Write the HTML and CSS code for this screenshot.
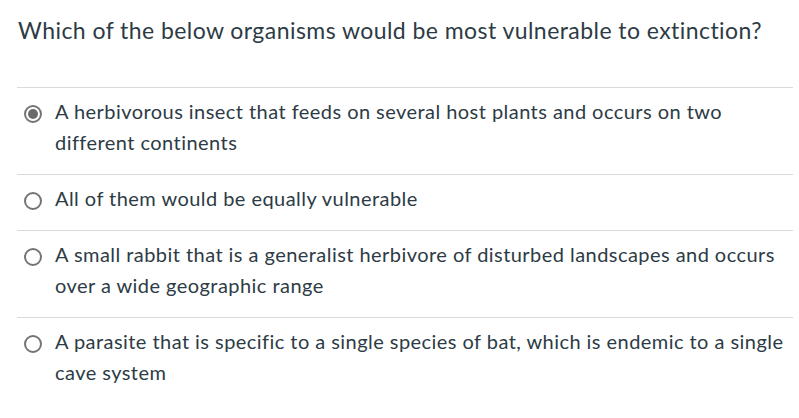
FILE: index.html
```html
<!DOCTYPE html>
<html>
<head>
<meta charset="utf-8">
<link rel="stylesheet" href="styles.css">
</head>
<body>
<div class="question">
  <div class="question-text">Which of the below organisms would be most vulnerable to extinction?</div>
  <div class="answers">
    <div class="answer">
      <span class="radio checked"></span>
      <span class="answer-text">A herbivorous insect that feeds on several host plants and occurs on two different continents</span>
    </div>
    <div class="answer">
      <span class="radio"></span>
      <span class="answer-text">All of them would be equally vulnerable</span>
    </div>
    <div class="answer">
      <span class="radio"></span>
      <span class="answer-text">A small rabbit that is a generalist herbivore of disturbed landscapes and occurs over a wide geographic range</span>
    </div>
    <div class="answer">
      <span class="radio"></span>
      <span class="answer-text">A parasite that is specific to a single species of bat, which is endemic to a single cave system</span>
    </div>
  </div>
</div>
</body>
</html>
```
FILE: styles.css
```css
html, body {
  margin: 0;
  padding: 0;
  background: #ffffff;
}
body {
  font-family: Lato, "Open Sans", sans-serif;
  color: #2d3b45;
}
.question {
  padding: 0 6px 0 17px;
}
.question-text {
  font-size: 23px;
  letter-spacing: 0.44px;
  line-height: 30px;
  padding: 15px 0 42px 1px;
}
.answer {
  display: flex;
  align-items: flex-start;
  border-top: 1px solid #dadada;
  padding: 8px 0 16px 7px;
  font-size: 20px;
  letter-spacing: 0.45px;
  line-height: 31px;
}
.radio {
  flex: none;
  width: 18px;
  height: 18px;
  box-sizing: border-box;
  border: 2px solid #757575;
  border-radius: 50%;
  margin: 9px 13px 0 0;
  position: relative;
  background: #fff;
}
.radio.checked::after {
  content: "";
  position: absolute;
  left: 2px;
  top: 2px;
  width: 10px;
  height: 10px;
  border-radius: 50%;
  background: #6b6b6b;
}
.answer-text {
  flex: 1;
}
```
